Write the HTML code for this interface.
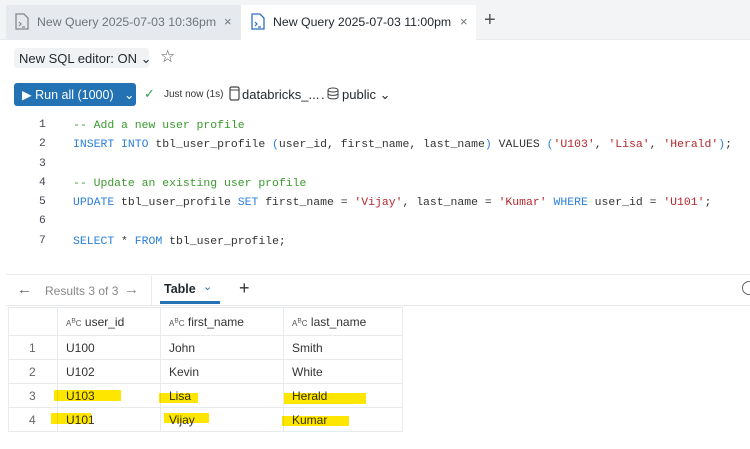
<!DOCTYPE html>
<html><head><style>
*{margin:0;padding:0;box-sizing:border-box}
body{width:750px;height:449px;background:#fff;font-family:"Liberation Sans",sans-serif;position:relative;overflow:hidden;color:#1f272d}
.abs{position:absolute;white-space:nowrap}
.tabbar{position:absolute;left:0;top:0;width:750px;height:40px;background:#f3f4f6;border-bottom:1px solid #e8eaed}
.tab1{position:absolute;left:6px;top:5px;width:235px;height:35px;background:#e6eaee}
.tab2{position:absolute;left:241px;top:5px;width:235px;height:36px;background:#fff}
.code{font-family:"Liberation Mono",monospace;font-size:11.45px;color:#333}
.kw{color:#2b7fd8}.cm{color:#3a9a2e}.st{color:#b5262b}.pn{color:#2b7fd8}
.ln{font-family:"Liberation Mono",monospace;font-size:11.3px;color:#445;}
.hl{position:absolute;background:#ffe600;mix-blend-mode:multiply}
table{position:absolute;left:8px;top:307px;border-collapse:collapse;font-size:12px}
td{border:1px solid #e8ebee;height:24px;padding-left:8px;color:#333}
</style></head><body>
<div class="tabbar"></div>
<div class="tab1"></div>
<div class="tab2"></div>
<svg class="abs" style="left:15px;top:13px" width="14" height="17" viewBox="0 0 14 17"><path d="M1 1h8l4 4v11H1z" fill="none" stroke="#888" stroke-width="1.3"/><path d="M4 9l2 2-2 2M7 14h3" stroke="#888" fill="none" stroke-width="1.2"/></svg>
<div class="abs" style="left:37px;top:15px;font-size:12.3px;color:#6d747b">New Query 2025-07-03 10:36pm</div>
<div class="abs" style="left:224px;top:14px;font-size:13px;color:#6d747b">×</div>
<svg class="abs" style="left:251px;top:13px" width="14" height="17" viewBox="0 0 14 17"><path d="M1 1h8l4 4v11H1z" fill="none" stroke="#2b6fc1" stroke-width="1.3"/><path d="M4 9l2 2-2 2M7 14h3" stroke="#2b6fc1" fill="none" stroke-width="1.2"/></svg>
<div class="abs" style="left:273px;top:15px;font-size:12.3px;color:#1f272d">New Query 2025-07-03 11:00pm</div>
<div class="abs" style="left:460px;top:14px;font-size:13px;color:#6d747b">×</div>
<div class="abs" style="left:484px;top:9px;font-size:20px;color:#555;font-weight:300">+</div>

<div class="abs" style="left:14px;top:48px;width:135px;height:20px;background:#f1f2f4;border-radius:3px"></div>
<div class="abs" style="left:19px;top:51px;font-size:13px;color:#1f272d">New SQL editor: ON ⌄</div>
<div class="abs" style="left:160px;top:47px;font-size:17px;color:#555">☆</div>

<div class="abs" style="left:14px;top:83px;width:122px;height:23px;background:#2272b4;border-radius:3px"></div>
<div class="abs" style="left:22px;top:87px;font-size:12.5px;color:#fff">▶ Run all (1000) &nbsp;&nbsp;⌄</div>
<div class="abs" style="left:144px;top:86px;font-size:13px;color:#2f9e44">✓</div>
<div class="abs" style="left:164px;top:89px;font-size:10px;color:#333">Just now (1s)</div>
<svg class="abs" style="left:229px;top:86px" width="11" height="15"><rect x="1" y="1" width="9" height="13" rx="1.5" fill="none" stroke="#444" stroke-width="1.2"/><line x1="1" y1="4" x2="10" y2="4" stroke="#444"/></svg>
<div class="abs" style="left:242px;top:87px;font-size:13px;color:#1f272d">databricks_...</div>
<div class="abs" style="left:321px;top:87px;font-size:13px;color:#1f272d">.</div>
<svg class="abs" style="left:327px;top:87px" width="12" height="13"><ellipse cx="6" cy="3" rx="5" ry="2" fill="none" stroke="#444"/><path d="M1 3v7c0 2.5 10 2.5 10 0V3M1 6.5c0 2.5 10 2.5 10 0" fill="none" stroke="#444"/></svg>
<div class="abs" style="left:342px;top:87px;font-size:13px;color:#1f272d">public ⌄</div>

<div class="abs ln" style="left:39px;top:116px;line-height:19.3px">1<br>2<br>3<br>4<br>5<br>6<br>7</div>
<div class="abs code" style="left:73px;top:116px;line-height:19.3px"><span class="cm">-- Add a new user profile</span><br><span class="kw">INSERT INTO</span> tbl_user_profile <span class="pn">(</span>user_id, first_name, last_name<span class="pn">)</span> VALUES <span class="pn">(</span><span class="st">'U103'</span>, <span class="st">'Lisa'</span>, <span class="st">'Herald'</span><span class="pn">)</span>;<br>&nbsp;<br><span class="cm">-- Update an existing user profile</span><br><span class="kw">UPDATE</span> tbl_user_profile <span class="kw">SET</span> first_name = <span class="st">'Vijay'</span>, last_name = <span class="st">'Kumar'</span> <span class="kw">WHERE</span> user_id = <span class="st">'U101'</span>;<br>&nbsp;<br><span class="kw">SELECT</span> * <span class="kw">FROM</span> tbl_user_profile;</div>

<div class="abs" style="left:6px;top:274px;width:744px;height:1px;background:#e8eaed"></div>
<div class="abs" style="left:6px;top:305px;width:744px;height:1px;background:#e8eaed"></div>
<div class="abs" style="left:151px;top:276px;width:1px;height:29px;background:#e8eaed"></div>
<div class="abs" style="left:17px;top:281px;font-size:15px;color:#666">←</div>
<div class="abs" style="left:45px;top:284px;font-size:12px;color:#888">Results 3 of 3</div>
<div class="abs" style="left:124px;top:281px;font-size:15px;color:#888">→</div>
<div class="abs" style="left:164px;top:282px;font-size:12.5px;font-weight:bold;color:#1f272d">Table</div>
<div class="abs" style="left:203px;top:280px;font-size:11px;color:#2272b4">⌄</div>
<div class="abs" style="left:160px;top:301px;width:60px;height:3px;background:#2272b4"></div>
<div class="abs" style="left:239px;top:278px;font-size:18px;color:#333">+</div>
<div class="abs" style="left:742px;top:281px;width:14px;height:14px;border:1.5px solid #666;border-radius:50%"></div>

<table>
<tr style="height:28px"><td style="width:49px"></td><td style="width:103px;color:#333"><span style="font-size:8px;color:#555">A<sup>B</sup>C</span> user_id</td><td style="width:123px"><span style="font-size:8px;color:#555">A<sup>B</sup>C</span> first_name</td><td style="width:119px"><span style="font-size:8px;color:#555">A<sup>B</sup>C</span> last_name</td></tr>
<tr><td style="padding-left:20px;color:#666">1</td><td>U100</td><td>John</td><td>Smith</td></tr>
<tr><td style="padding-left:20px;color:#666">2</td><td>U102</td><td>Kevin</td><td>White</td></tr>
<tr><td style="padding-left:20px;color:#666">3</td><td>U103</td><td>Lisa</td><td>Herald</td></tr>
<tr><td style="padding-left:20px;color:#666">4</td><td>U101</td><td>Vijay</td><td>Kumar</td></tr>
</table>
<div class="hl" style="left:54px;top:390px;width:67px;height:11px"></div>
<div class="hl" style="left:159px;top:393px;width:39px;height:10px"></div>
<div class="hl" style="left:284px;top:393px;width:82px;height:11px"></div>
<div class="hl" style="left:51px;top:413px;width:40px;height:11px"></div>
<div class="hl" style="left:164px;top:413px;width:45px;height:10px"></div>
<div class="hl" style="left:282px;top:416px;width:67px;height:10px"></div>
</body></html>
